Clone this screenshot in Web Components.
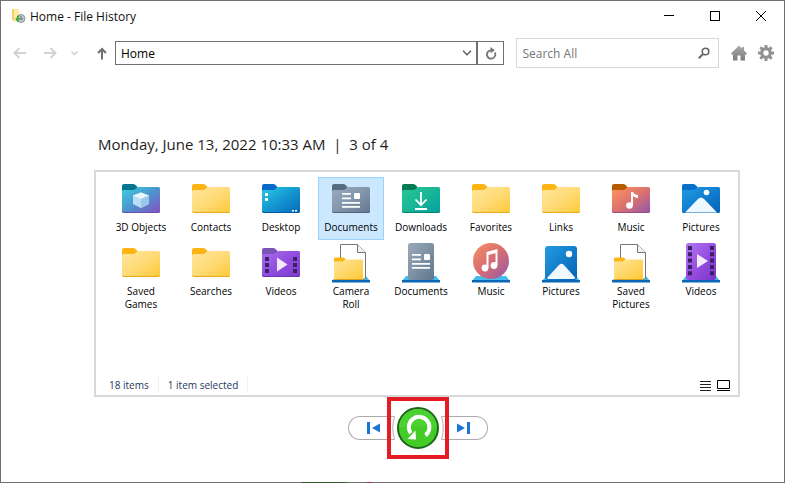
<!DOCTYPE html>
<html lang="en">
<head>
<meta charset="utf-8">
<title>Home - File History</title>
<style>
html,body{margin:0;height:100%}
body{font-family:"Open Sans","Noto Sans",sans-serif;font-size:12px;color:#111;background:#fff}
</style>
</head>
<body>
<fh-window>
  <fh-titlebar slot="title">Home - File History</fh-titlebar>
  <fh-toolbar slot="toolbar" location="Home" hint="Search All"></fh-toolbar>
  <fh-snapshot slot="content">
    <span slot="when">Monday, June 13, 2022 10:33 AM&nbsp; |&nbsp; 3 of 4</span>
    <fh-item icon="objects">3D Objects</fh-item>
    <fh-item icon="folder">Contacts</fh-item>
    <fh-item icon="desktop">Desktop</fh-item>
    <fh-item icon="documents" selected>Documents</fh-item>
    <fh-item icon="downloads">Downloads</fh-item>
    <fh-item icon="folder">Favorites</fh-item>
    <fh-item icon="folder">Links</fh-item>
    <fh-item icon="music">Music</fh-item>
    <fh-item icon="pictures">Pictures</fh-item>
    <fh-item icon="folder">Saved Games</fh-item>
    <fh-item icon="folder">Searches</fh-item>
    <fh-item icon="videos">Videos</fh-item>
    <fh-item icon="lib-folder">Camera Roll</fh-item>
    <fh-item icon="lib-documents">Documents</fh-item>
    <fh-item icon="lib-music">Music</fh-item>
    <fh-item icon="lib-pictures">Pictures</fh-item>
    <fh-item icon="lib-folder">Saved Pictures</fh-item>
    <fh-item icon="lib-videos">Videos</fh-item>
    <span slot="count">18 items</span>
    <span slot="selection">1 item selected</span>
  </fh-snapshot>
  <fh-playback slot="controls"></fh-playback>
</fh-window>

<script>
const BASE = `<style>
*{box-sizing:border-box}
button,input{font:inherit;color:inherit;background:none;border:0;padding:0;margin:0;border-radius:0;outline:0}
button{display:flex;align-items:center;justify-content:center}
svg{display:block;flex:none}
</style>`;

function define(name, render) {
  customElements.define(name, class extends HTMLElement {
    constructor() {
      super();
      this.attachShadow({mode: 'open'});
    }
    connectedCallback() {
      this.shadowRoot.innerHTML = BASE + render(this);
    }
  });
}

const grad = (id, a, b, c) => `<linearGradient id="${id}" x1="0" y1="0" x2="1" y2="1"><stop offset="0" stop-color="${a}"/>${c ? `<stop offset=".5" stop-color="${b}"/><stop offset="1" stop-color="${c}"/>` : `<stop offset="1" stop-color="${b}"/>`}</linearGradient>`;

const folder = (tab, edge, a, b, c, art = '') => `<defs>${grad('f', a, b, c)}</defs>
<path d="M1 7q0-2 2-2h9q1.500 0 2.500 1l2 2v5H1z" fill="${tab}"/>
<path d="M1 12.500q0-1.500 1.500-1.500H12q1.500 0 2.500-1l1-1q1-1 2.500-1h19.500Q39 8 39 9.500V32.500q0 1.500-1.500 1.500h-35Q1 34 1 32.500z" fill="url(#f)"/>
<path d="M1.500 32.500q.3 1 1.500 1h34q1.200 0 1.500-1" fill="none" stroke="${edge}"/>${art}`;

const base = `<path d="M5 33h30l4 5H1z" fill="#45bdf0"/><path d="M1 37h38v2.500H1z" fill="#0a67b5"/>`;
const page = (x, y) => `<g transform="translate(${x} ${y})" fill="#fff"><path d="M0 0h9v1.800H0zM0 4.500h9v1.800H0zM0 9h18v1.800H0zM0 13h18v1.800H0z"/><rect x="12" width="6" height="6" rx="1"/></g>`;

const ICONS = {
  folder: folder('#fcb514', '#e5a91e', '#ffe59c', '#ffdb78', '#ffc936'),
  objects: folder('#03758f', '#6d4aa8', '#3bd0e0', '#4c94cf', '#8750c1',
    `<path d="M20 13.500l8 3v8.500l-8 4-8-4v-8.500z" fill="#b9ddf5"/><path d="M20 13.500l8 3-8 3.500-8-3.500z" fill="#e9f7fd"/><path d="M20 20l8-3.500v8.500l-8 4z" fill="#9bc6ed"/>`),
  desktop: folder('#0869c9', '#075ba3', '#28cbe0', '#1597d1', '#0568b9',
    `<path d="M4 14h3v3H4zM4 19h3v3H4zM31 31h2v1.500h-2zM34 31h2v1.500h-2z" fill="#fff"/>`),
  documents: folder('#566d80', '#526579', '#9aabbc', '#8496ab', '#62768e', page(11, 14)),
  downloads: folder('#067957', '#07866c', '#27c795', '#19b697', '#079da4',
    `<path d="M20 13v13M14.500 20.500l5.500 5.700 5.500-5.700" fill="none" stroke="#fff" stroke-width="1.800"/><path d="M14 29h12v2H14z" fill="#fff"/>`),
  music: folder('#b85b00', '#9d4d7d', '#ff955a', '#dd726e', '#9156aa',
    `<circle cx="18.500" cy="26.500" r="3.300" fill="#fff"/><path d="M20 13h2q1.500 3 5 3v3q-3 0-5-2v10h-2z" fill="#fff"/>`),
  pictures: folder('#0670ca', '#0767b4', '#239be0', '#117fd1', '#0562b7',
    `<path d="M4 33.500L17 20q3-3 6 0l13 13.500z" fill="#eff8ff"/><circle cx="25.500" cy="13.500" r="2.800" fill="#fff"/>`),
  videos: folder('#7953b5', '#6837ad', '#ab6ce9', '#914ee0', '#7c39c9',
    `<path d="M16 14.500l10.500 7L16 28.500z" fill="#f4eafc"/><path d="M4 14h4v4H4zM4 20h4v4H4zM4 26h4v4H4zM32 14h4v4h-4zM32 20h4v4h-4zM32 26h4v4h-4z" fill="#3d2165"/>`),
  'lib-folder': base + `<defs>${grad('f', '#ffe59c', '#ffc936')}</defs>
<path d="M9.500 1.500h17l8 8V36h-25z" fill="#fff" stroke="#777"/><path d="M26.500 1.500v8h8" fill="#f2f2f2" stroke="#777"/>
<path d="M3 15.500q0-1 1-1h8q1 0 2 1l1 1v3H3z" fill="#fcb514"/><path d="M3 18.500h9l2-2h17q1 0 1 1V36q0 1-1 1H4q-1 0-1-1z" fill="url(#f)"/><path d="M3.500 36.500h28" stroke="#dfa11c"/>`,
  'lib-documents': base + `<defs>${grad('f', '#9baabb', '#61778e')}</defs><rect x="7" y="0" width="26" height="37" rx="2.500" fill="url(#f)"/>` + page(11, 11),
  'lib-music': base + `<defs>${grad('f', '#f79160', '#d76c73', '#9358ad')}</defs><circle cx="20" cy="18" r="18" fill="url(#f)"/>
<path d="M15.500 9l11-3v3.500l-9 2.500v13h-2zM24.500 7h2v15h-2z" fill="#fff"/><circle cx="14" cy="25" r="3.400" fill="#fff"/><circle cx="23" cy="22.500" r="3.400" fill="#fff"/>`,
  'lib-pictures': base + `<defs>${grad('f', '#239be0', '#0562b7')}</defs><rect x="4" y="3" width="32" height="34" rx="3" fill="url(#f)"/>
<path d="M6 35l12-13q2.500-2.500 5 0l11.500 13q-1 1-2.500 1H8q-1.500 0-2-1z" fill="#f0f8ff"/><circle cx="28" cy="11" r="3.200" fill="#fff"/>`,
  'lib-videos': base + `<defs>${grad('f', '#b27af0', '#974fe2', '#7835c6')}</defs><rect x="5" y="0" width="30" height="37" rx="2.500" fill="url(#f)"/>
<path d="M16 11l11 7-11 7z" fill="#f4eafc"/><path d="M7 3h4v4H7zM7 9.300h4v4H7zM7 15.600h4v4H7zM7 21.900h4v4H7zM7 28.200h4v4H7zM29 3h4v4h-4zM29 9.300h4v4h-4zM29 15.600h4v4h-4zM29 21.900h4v4h-4zM29 28.200h4v4h-4z" fill="#3b2066"/>`
};

define('fh-icon', el => `<style>:host{display:block}</style>
<svg width="40" height="40" viewBox="0 0 40 40" aria-hidden="true">${ICONS[el.getAttribute('name')]}</svg>`);

define('fh-item', el => `<style>
:host{display:flex}
button{flex:1;min-width:0;flex-direction:column;justify-content:flex-start;gap:2px;padding:1px 0 4px;border:1px solid transparent;font-size:10px;line-height:13px;color:#000}
:host([selected]) button{background:#cce8ff;border-color:#99d1ff}
span{max-width:55px;text-align:center}
</style>
<button type="button" aria-pressed="${el.hasAttribute('selected')}"><fh-icon name="${el.getAttribute('icon')}"></fh-icon><span><slot></slot></span></button>`);

define('fh-titlebar', () => `<style>
:host{display:flex;align-items:center;height:30px;padding-left:10px}
.name{flex:1;padding-left:4px}
button{width:46px;height:30px}
</style>
<svg width="15" height="16" viewBox="0 0 15 16"><path d="M1 1h5l1 2v10H3l-2-1z" fill="#f5cf68"/><path d="M3 1h5v12l-5 1z" fill="#ffe9a4"/><circle cx="10" cy="10.500" r="4" fill="#c3c8cc" stroke="#8c9499"/><path d="M8 11h4M10 8v3" stroke="#64707a"/><path d="M8.500 7q-3 .5-3 3.500H4l2.500 3.500 2.500-3.500H7.500q0-2 1-2.500z" fill="#35aa3d"/></svg>
<span class="name"><slot></slot></span>
<button type="button" aria-label="Minimize"><svg width="10" height="10"><path d="M0 4.500h10" stroke="#000"/></svg></button>
<button type="button" aria-label="Maximize"><svg width="10" height="10"><rect x=".5" y=".5" width="9" height="9" fill="none" stroke="#000"/></svg></button>
<button type="button" aria-label="Close"><svg width="10" height="10"><path d="M0 0l10 10M10 0L0 10" stroke="#000"/></svg></button>`);

define('fh-toolbar', el => `<style>
:host{display:flex;align-items:center;height:30px;margin-top:7px;padding:0 10px 0 9px}
.nav{display:flex;flex:none;color:#d2d2d2}
.nav button{width:30px;height:24px;padding-right:10px}
.nav .recent{width:18px}
.nav .up{color:#707070;width:27px;padding-right:0}
.address{display:flex;flex:363;min-width:0;height:24px;border:1px solid #707070}
.address input{flex:1;min-width:0;padding:0 5px;color:#000}
.address button{width:18px;color:#555}
.refresh{width:27px;height:24px;border:1px solid #707070;color:#777}
.search{display:flex;flex:202;min-width:0;height:30px;margin:0 12px;border:1px solid #d9d9d9}
.search input{flex:1;min-width:0;padding:0 5px}
.search input::placeholder{color:#767676;opacity:1}
.search button{width:28px;color:#666}
.tool{width:16px;height:20px}
.tool + .tool{margin-left:11px}
</style>
<div class="nav">
<button type="button" aria-label="Back"><svg width="14" height="12" fill="none" stroke="currentColor" stroke-width="2"><path d="M1.500 6H13M6.500 1l-5 5 5 5"/></svg></button>
<button type="button" aria-label="Forward"><svg width="14" height="12" fill="none" stroke="currentColor" stroke-width="2"><path d="M1 6h11.500M7.500 1l5 5-5 5"/></svg></button>
<button type="button" class="recent" aria-label="Recent locations"><svg width="7" height="6" fill="none" stroke="currentColor" stroke-width="1.500"><path d="M.5 1.500l3 3 3-3"/></svg></button>
<button type="button" class="up" aria-label="Up"><svg width="10" height="13" fill="none" stroke="currentColor" stroke-width="2"><path d="M5 12.500V2M1 6l4-4 4 4"/></svg></button>
</div>
<div class="address"><input type="text" aria-label="Address" value="${el.getAttribute('location')}"><button type="button" aria-label="Show addresses"><svg width="10" height="6" fill="none" stroke="currentColor" stroke-width="1.300"><path d="M1 .8l4 4 4-4"/></svg></button></div>
<button type="button" class="refresh" aria-label="Refresh"><svg width="12" height="13" viewBox="0 0 12 13"><path d="M9.800 5.500A4.200 4.200 0 1 1 6 3.300" fill="none" stroke="currentColor" stroke-width="1.800"/><path d="M5.500 0v6.200L9.800 3.200z" fill="currentColor"/></svg></button>
<div class="search"><input type="text" aria-label="Search All" placeholder="${el.getAttribute('hint')}"><button type="button" aria-label="Search"><svg width="12" height="12" fill="none" stroke="currentColor"><circle cx="7.500" cy="4.500" r="3.300" stroke-width="1.600"/><path d="M5 7L.8 11.200" stroke-width="2"/></svg></button></div>
<button type="button" class="tool" aria-label="Home"><svg width="16" height="16" viewBox="0 0 16 16"><defs><linearGradient id="g" x2="0" y2="1"><stop stop-color="#aaa"/><stop offset="1" stop-color="#7c7c7c"/></linearGradient></defs><path d="M8 .5L11 3.500V2h2v3.500L16 8.500 14.700 10 14 9.300V15.500H9.500V10.500h-3v5H2V9.300L1.300 10 0 8.500z" fill="url(#g)"/></svg></button>
<button type="button" class="tool" aria-label="Settings"><svg width="16" height="16" viewBox="-8 -8 16 16"><g stroke="#929292" stroke-width="3"><path d="M0-8V-4M0 4V8M-8 0h4M4 0h4M-5.700-5.700l3 3M5.700-5.700l-3 3M-5.700 5.700l3-3M5.700 5.700l-3-3"/></g><circle r="4.300" fill="none" stroke="#929292" stroke-width="3.200"/></svg></button>`);

define('fh-snapshot', () => `<style>
:host{display:flex;flex-direction:column;flex:1;min-height:0;padding:0 44px 0 93px}
h1{margin:0;padding:0 4px;font-size:15px;line-height:20px;font-weight:400;color:#1e1e1e;white-space:nowrap}
.panel{display:flex;flex-direction:column;flex:1;min-height:0;margin-top:16px;border:2px solid #d9d9d9}
.items{display:grid;grid-template-columns:repeat(auto-fill,66px);grid-auto-rows:minmax(63px,max-content);gap:1px 4px;align-content:start;flex:1;padding:5px 4px 0 12px}
.status{display:flex;align-items:center;height:20px;padding:0 8px 0 13px;font-size:10px;color:#1e395b}
.status div{padding-right:9px;margin-right:9px;border-right:1px solid #f0f0f0;line-height:16px}
.views{display:flex;margin-left:auto;gap:6px}
</style>
<h1><slot name="when"></slot></h1>
<div class="panel">
<div class="items"><slot></slot></div>
<div class="status"><div><slot name="count"></slot></div><div><slot name="selection"></slot></div>
<span class="views"><button type="button" aria-label="Details"><svg width="11" height="11"><path d="M0 1.500h11M0 4.500h11M0 7.500h11M0 10.500h11" stroke="#222"/></svg></button>
<button type="button" aria-label="Large icons"><svg width="13" height="11"><path d="M.5.500h12v8H.5zM0 10.500h13" fill="none" stroke="#000"/></svg></button></span></div>
</div>`);

define('fh-playback', () => `<style>
:host{display:flex;align-items:center;justify-content:center;padding-left:51px}
.side{width:39px;height:24px;border:1px solid #aaa;color:#1976d2}
.prev{border-radius:12px 0 0 12px;border-right:0;padding-left:10px}
.next{border-radius:0 12px 12px 0;border-left:0;padding-right:10px}
.mark{width:62px;height:62px;border:4px solid #e51c24;display:flex;align-items:center;justify-content:center}
</style>
<button type="button" class="side prev" aria-label="Previous version"><svg width="13" height="12" fill="currentColor"><path d="M0 0h3v12H0zM13 1.500v9L5 6z"/></svg></button>
<div class="mark"><button type="button" aria-label="Restore"><svg width="54" height="54" viewBox="-27 -27 54 54"><path d="M-23.500-11.500H-27M-23.500 11.500H-27M23.500-11.500H27M23.500 11.500H27M-23.500-11.500Q-27 0-23.500 11.500M23.500-11.500Q27 0 23.500 11.500" fill="none" stroke="#b0b0b0"/><circle r="20" fill="#43cc27" stroke="#1d651a" stroke-width="2"/><path d="M-19 0A19 19 0 0 1 19 0Q0-4-19 0z" fill="#4bd131"/><path d="M7.500 7.300A10.300 10.300 0 1 0-7.200 5.200" fill="none" stroke="#fff" stroke-width="4"/><path d="M-10.500 11L-2 11.500-2.500 2.500z" fill="#fff"/></svg></button></div>
<button type="button" class="side next" aria-label="Next version"><svg width="13" height="12" fill="currentColor"><path d="M10 0h3v12h-3zM0 1.500v9L8 6z"/></svg></button>`);

define('fh-window', () => `<style>
:host{display:flex;flex-direction:column;min-height:100vh;box-sizing:border-box;border:1px solid #707070;border-bottom:0;background:#fff}
.gap{height:66px}
.controls{padding-bottom:23px}
.edge{height:1px;background:linear-gradient(90deg,transparent 300px,#31562d 300px,#35602f 346px,transparent 347px,transparent 366px,#a32a44 366px,#a32a44 371px,transparent 371px),#707070}
main{display:flex;flex:1;min-height:0}
</style>
<slot name="title"></slot><slot name="toolbar"></slot><div class="gap"></div>
<main><slot name="content"></slot></main>
<div class="controls"><slot name="controls"></slot></div><div class="edge"></div>`);
</script>
</body>
</html>
